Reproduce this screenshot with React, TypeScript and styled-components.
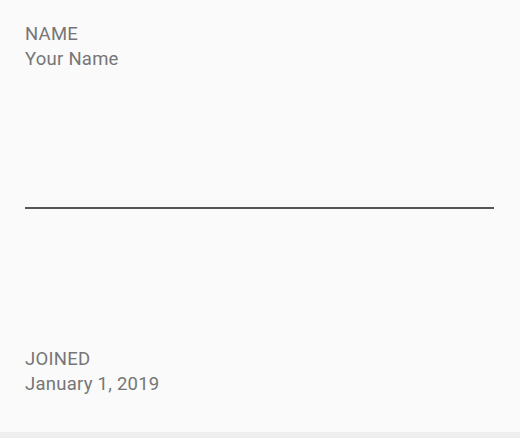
import React from "react";
import styled, { createGlobalStyle } from "styled-components";

const GlobalStyle = createGlobalStyle`
  html, body {
    margin: 0;
    padding: 0;
    background: #eeeeee;
  }
  body {
    font-family: Roboto, "Noto Sans", sans-serif;
  }
`;

const Page = styled.div`
  width: 520px;
  height: 432px;
  background: #fafafa;
  box-sizing: border-box;
  padding: 22px 26px 0 25px;
  display: flex;
  flex-direction: column;
`;

const Field = styled.div<{ $top?: number }>`
  display: flex;
  flex-direction: column;
  margin-top: ${(p) => p.$top ?? 0}px;
  color: #767676;
  font-size: 18.5px;
  line-height: 25px;
  letter-spacing: 0.25px;
`;

const Label = styled.span`
  text-transform: uppercase;
`;

const Value = styled.span``;

const Divider = styled.div`
  margin-top: 135px;
  height: 2px;
  background: #555555;
`;

const profile = {
  name: "Your Name",
  joined: "January 1, 2019",
};

const App: React.FC = () => {
  return (
    <>
      <GlobalStyle />
      <Page>
        <Field>
          <Label>Name</Label>
          <Value>{profile.name}</Value>
        </Field>
        <Divider />
        <Field $top={138}>
          <Label>Joined</Label>
          <Value>{profile.joined}</Value>
        </Field>
      </Page>
    </>
  );
};

export default App;
